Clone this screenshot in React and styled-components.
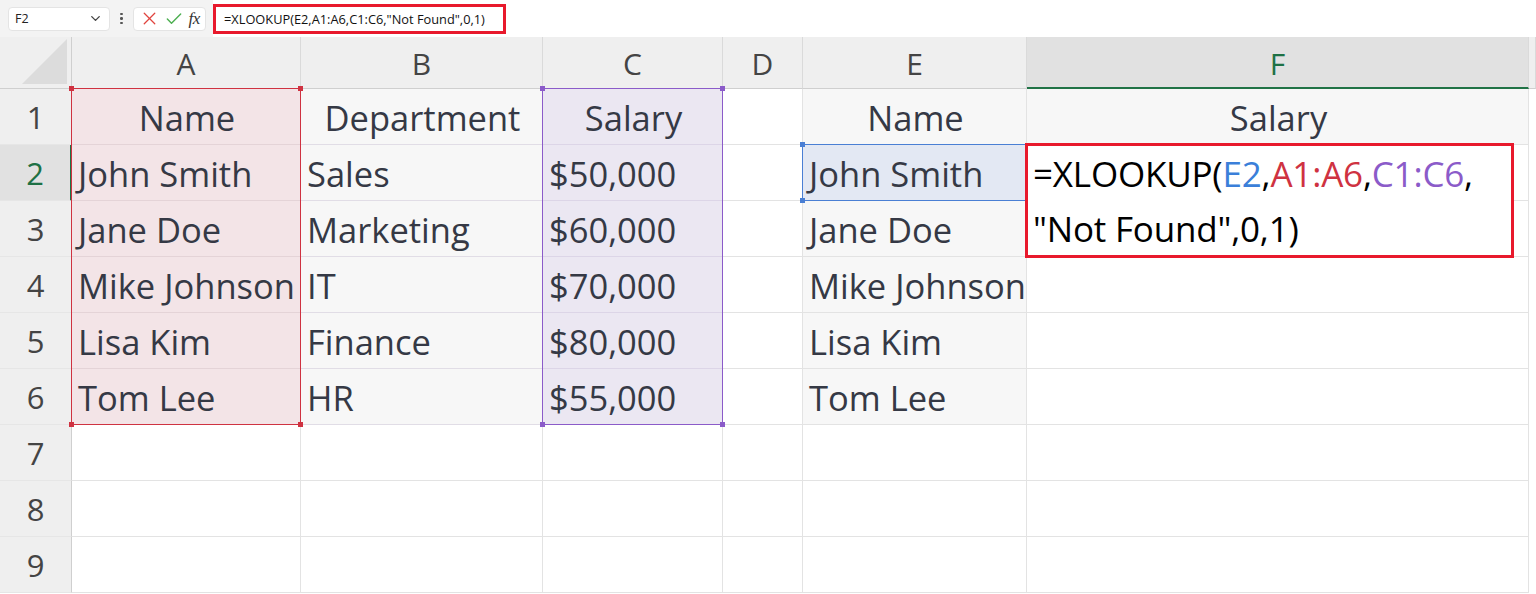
import React from "react";
import styled, { createGlobalStyle } from "styled-components";
import { ChevronDown, X, Check } from "lucide-react";

const GlobalStyle = createGlobalStyle`
  html, body {
    margin: 0;
    padding: 0;
    background: #ffffff;
    overflow: hidden;
  }
  * {
    box-sizing: border-box;
  }
`;

const Page = styled.div`
  width: 1536px;
  height: 594px;
  display: flex;
  flex-direction: column;
  background: #ffffff;
  font-family: "Open Sans", "Noto Sans", sans-serif;
`;

/* formula bar */

const FormulaBar = styled.div`
  height: 37px;
  flex: none;
  display: flex;
  align-items: center;
  padding: 0 0 0 8px;
  background: #f3f3f3;
`;

const NameBox = styled.div`
  width: 102px;
  height: 24px;
  display: flex;
  align-items: center;
  justify-content: space-between;
  padding: 0 6px 0 6px;
  background: #ffffff;
  border: 1px solid #e4e4e4;
  border-radius: 4px;
  font-size: 12.5px;
  color: #222;
`;

const Dots = styled.div`
  width: 23px;
  display: flex;
  flex-direction: column;
  align-items: center;
  gap: 2px;

  span {
    width: 2.5px;
    height: 2.5px;
    border-radius: 50%;
    background: #555;
  }
`;

const ButtonGroup = styled.div`
  width: 73px;
  height: 24px;
  display: flex;
  align-items: center;
  justify-content: space-around;
  padding: 0 3px;
  background: #ffffff;
  border: 1px solid #e4e4e4;
  border-radius: 4px;
`;

const Fx = styled.span`
  font-family: "Liberation Serif", "DejaVu Serif", serif;
  font-style: italic;
  font-size: 17px;
  color: #333;
  letter-spacing: -0.5px;
`;

const FormulaInput = styled.div`
  flex: 1;
  height: 37px;
  margin-left: 7px;
  display: flex;
  align-items: center;
  background: #ffffff;
`;

const FormulaMark = styled.div`
  width: 293px;
  height: 30px;
  display: flex;
  align-items: center;
  padding-left: 8px;
  border: 3px solid #e8192c;
  font-size: 12.8px;
  color: #111;
`;

/* sheet grid */

const Sheet = styled.div`
  flex: 1;
  display: grid;
  grid-template-columns: 72px 229px 242px 180px 80px 224px 502px 7px;
  grid-template-rows: 52px repeat(9, 56px);
`;

const Corner = styled.div`
  grid-column: 1;
  grid-row: 1;
  background: #efefef;
  border-right: 1px solid #cfcfcf;
  border-bottom: 1px solid #cfcfcf;
  display: flex;
  align-items: flex-end;
  justify-content: flex-end;
  padding: 0 4px 4px 0;

  &::after {
    content: "";
    width: 45px;
    height: 45px;
    background: #dcdcdc;
    clip-path: polygon(100% 0, 100% 100%, 0 100%);
  }
`;

const ColHead = styled.div`
  grid-column: ${(p) => p.$col};
  grid-row: 1;
  display: flex;
  align-items: center;
  justify-content: center;
  padding-top: 2px;
  font-size: 30px;
  color: ${(p) => (p.$active ? "#1e7145" : "#444")};
  background: ${(p) => (p.$active ? "#e1e1e1" : "#efefef")};
  border-right: 1px solid #dadada;
  border-bottom: ${(p) => (p.$active ? "2px solid #217346" : "1px solid #cfcfcf")};
`;

const RowHead = styled.div`
  grid-column: 1;
  grid-row: ${(p) => p.$row};
  display: flex;
  align-items: center;
  justify-content: center;
  font-size: 31px;
  color: ${(p) => (p.$active ? "#1e7145" : "#444")};
  background: ${(p) => (p.$active ? "#e1e1e1" : "#efefef")};
  border-right: ${(p) => (p.$active ? "2px solid #217346" : "1px solid #cfcfcf")};
  border-bottom: 1px solid #e6e6e6;
`;

const Cell = styled.div`
  grid-column: ${(p) => p.$col};
  grid-row: ${(p) => p.$row};
  display: flex;
  align-items: center;
  justify-content: ${(p) => (p.$center ? "center" : "flex-start")};
  padding: 1px 4px 0 6px;
  font-size: 34.5px;
  color: #353945;
  white-space: nowrap;
  overflow: visible;
  background: ${(p) => p.$fill || "#ffffff"};
  border-right: 1px solid ${(p) => p.$line || "#e3e3e3"};
  border-bottom: 1px solid ${(p) => p.$line || "#e3e3e3"};
`;

const Range = styled.div`
  grid-column: ${(p) => p.$col};
  grid-row: ${(p) => p.$row};
  position: relative;
  margin: -1px 0 0 -1px;
  border: 1.5px solid ${(p) => p.$color};
  pointer-events: none;
  z-index: 2;
`;

const Handle = styled.span`
  position: absolute;
  width: 5px;
  height: 5px;
  background: ${(p) => p.$color};
  ${(p) => (p.$top ? "top: -3px;" : "bottom: -3px;")}
  ${(p) => (p.$left ? "left: -3px;" : "right: -3px;")}
`;

const FormulaBox = styled.div`
  grid-column: 7;
  grid-row: 3 / 5;
  width: 489px;
  margin: -2px 0 -1px -2px;
  padding: 0 8px 0 5px;
  background: #ffffff;
  border: 3px solid #e8192c;
  font-size: 35px;
  line-height: 55px;
  color: #000;
  letter-spacing: -0.2px;
  white-space: nowrap;
  z-index: 3;
`;

const Ref = styled.span`
  color: ${(p) => p.$color};
`;

const PINK = "#f3e4e7";
const PINK_LINE = "#e4d3d7";
const LAV = "#ebe7f2";
const LAV_LINE = "#dcd5e7";
const GREY = "#f7f7f7";
const GREY_LINE = "#e1dde6";

const columns = ["A", "B", "C", "D", "E", "F"];

const tableRows = [
  ["Name", "Department", "Salary"],
  ["John Smith", "Sales", "$50,000"],
  ["Jane Doe", "Marketing", "$60,000"],
  ["Mike Johnson", "IT", "$70,000"],
  ["Lisa Kim", "Finance", "$80,000"],
  ["Tom Lee", "HR", "$55,000"],
];

const lookupNames = ["Name", "John Smith", "Jane Doe", "Mike Johnson", "Lisa Kim", "Tom Lee"];

const styleFor = (col, r) => {
  if (r > 6) return {};
  if (col === 2) return { $fill: PINK, $line: PINK_LINE };
  if (col === 3) return { $fill: GREY, $line: GREY_LINE };
  if (col === 4) return { $fill: LAV, $line: LAV_LINE };
  if (col === 6) {
    if (r === 2) return { $fill: "#e3e8f3", $line: "#d6dcea" };
    return { $fill: GREY, $line: "#e3e3e3" };
  }
  if (col === 7 && r === 1) return { $fill: GREY, $line: "#e3e3e3" };
  return {};
};

const cellText = (col, r) => {
  if (r > 6) return "";
  if (col >= 2 && col <= 4) return tableRows[r - 1][col - 2];
  if (col === 6) return lookupNames[r - 1];
  if (col === 7 && r === 1) return "Salary";
  return "";
};

const Corners = ({ color, sides = ["tl", "tr", "bl", "br"] }) =>
  sides.map((s) => (
    <Handle key={s} $color={color} $top={s[0] === "t"} $left={s[1] === "l"} />
  ));

export default function App() {
  const cells = [];
  for (let r = 1; r <= 9; r++) {
    cells.push(
      <RowHead key={`h${r}`} $row={r + 1} $active={r === 2}>
        {r}
      </RowHead>
    );
    for (let col = 2; col <= 7; col++) {
      cells.push(
        <Cell
          key={`${r}-${col}`}
          $col={col}
          $row={r + 1}
          $center={r === 1}
          {...styleFor(col, r)}
        >
          {cellText(col, r)}
        </Cell>
      );
    }
  }

  return (
    <>
      <GlobalStyle />
      <Page>
        <FormulaBar>
          <NameBox>
            <span>F2</span>
            <ChevronDown size={15} strokeWidth={2.2} color="#444" />
          </NameBox>
          <Dots>
            <span />
            <span />
            <span />
          </Dots>
          <ButtonGroup>
            <X size={21} strokeWidth={1.5} color="#e0443e" />
            <Check size={20} strokeWidth={1.7} color="#4caf50" />
            <Fx>fx</Fx>
          </ButtonGroup>
          <FormulaInput>
            <FormulaMark>=XLOOKUP(E2,A1:A6,C1:C6,"Not Found",0,1)</FormulaMark>
          </FormulaInput>
        </FormulaBar>

        <Sheet>
          <Corner />
          {columns.map((c, i) => (
            <ColHead key={c} $col={i + 2} $active={c === "F"}>
              {c}
            </ColHead>
          ))}
          <ColHead $col={8} />
          {cells}

          <Range $col="2" $row="2 / 8" $color="#cf3241">
            <Corners color="#cf3241" />
          </Range>
          <Range $col="4" $row="2 / 8" $color="#8b5bc9">
            <Corners color="#8b5bc9" />
          </Range>
          <Range $col="6" $row="3" $color="#4a7fd4">
            <Corners color="#4a7fd4" sides={["tl", "bl"]} />
          </Range>

          <FormulaBox>
            =XLOOKUP(<Ref $color="#3b7fd9">E2</Ref>,
            <Ref $color="#cf3241">A1:A6</Ref>,
            <Ref $color="#8b5bc9">C1:C6</Ref>,
            <br />
            "Not Found",0,1)
          </FormulaBox>
        </Sheet>
      </Page>
    </>
  );
}
